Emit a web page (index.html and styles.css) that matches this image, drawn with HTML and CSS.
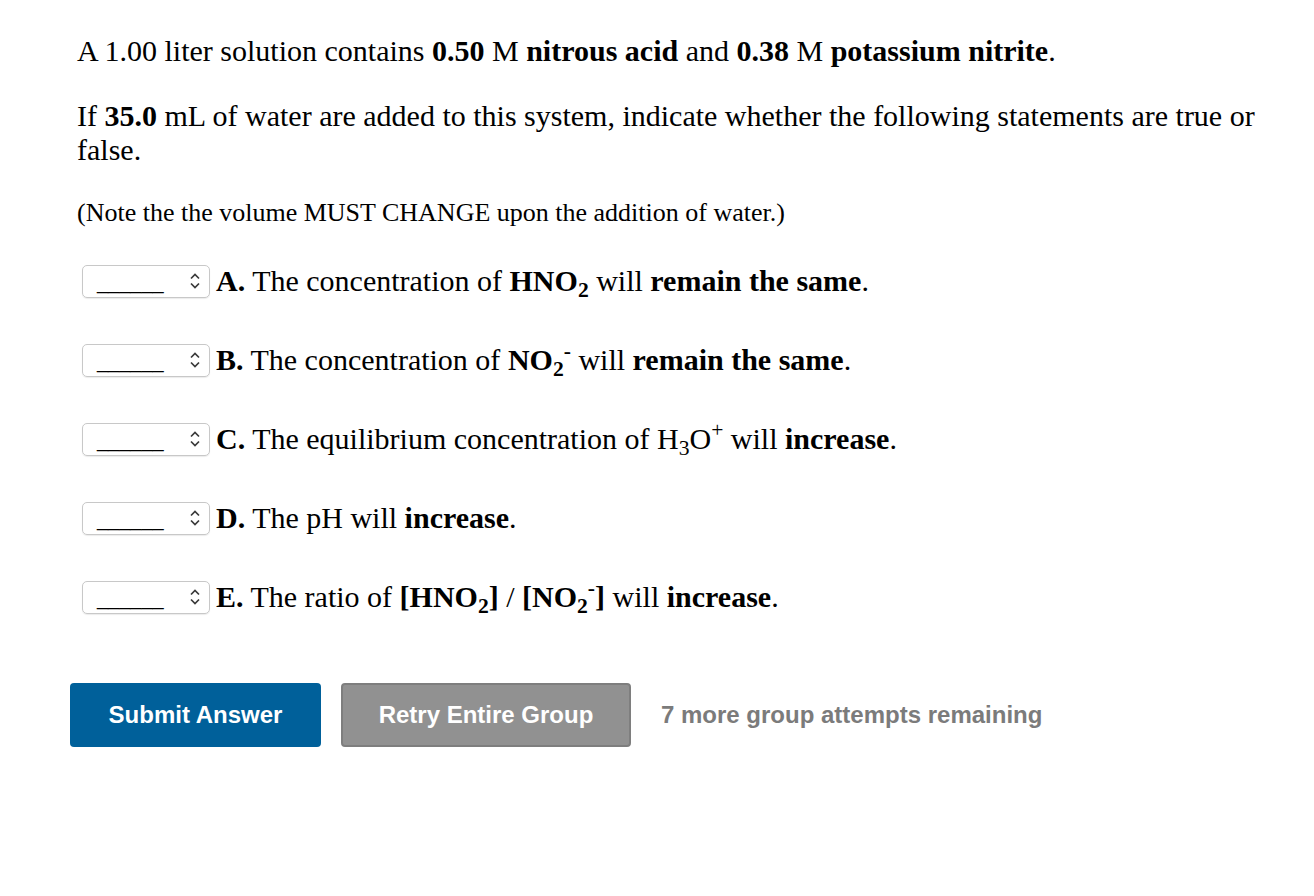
FILE: index.html
```html
<!DOCTYPE html>
<html lang="en">
<head>
    <meta charset="UTF-8">
    <title>Question</title>
    <link rel="stylesheet" href="styles.css">
</head>
<body>
    <div class="question">
        <p class="stem">A 1.00 liter solution contains <b>0.50</b> M <b>nitrous acid</b> and <b>0.38</b> M <b>potassium nitrite</b>.</p>

        <p class="stem">If <b>35.0</b> mL of water are added to this system, indicate whether the following statements are true or<br>false.</p>

        <p class="note">(Note the the volume MUST CHANGE upon the addition of water.)</p>

        <div class="statements">
            <div class="statement">
                <div class="pick"><span class="blank">______</span><svg class="chev" viewBox="0 0 12 20"><path d="M2 7.5 L6 3.5 L10 7.5 M2 12.5 L6 16.5 L10 12.5"/></svg></div>
                <span><b>A.</b> The concentration of <b>HNO<sub>2</sub></b> will <b>remain the same</b>.</span>
            </div>
            <div class="statement">
                <div class="pick"><span class="blank">______</span><svg class="chev" viewBox="0 0 12 20"><path d="M2 7.5 L6 3.5 L10 7.5 M2 12.5 L6 16.5 L10 12.5"/></svg></div>
                <span><b>B.</b> The concentration of <b>NO<sub>2</sub><sup>-</sup></b> will <b>remain the same</b>.</span>
            </div>
            <div class="statement">
                <div class="pick"><span class="blank">______</span><svg class="chev" viewBox="0 0 12 20"><path d="M2 7.5 L6 3.5 L10 7.5 M2 12.5 L6 16.5 L10 12.5"/></svg></div>
                <span><b>C.</b> The equilibrium concentration of H<sub>3</sub>O<sup>+</sup> will <b>increase</b>.</span>
            </div>
            <div class="statement">
                <div class="pick"><span class="blank">______</span><svg class="chev" viewBox="0 0 12 20"><path d="M2 7.5 L6 3.5 L10 7.5 M2 12.5 L6 16.5 L10 12.5"/></svg></div>
                <span><b>D.</b> The pH will <b>increase</b>.</span>
            </div>
            <div class="statement">
                <div class="pick"><span class="blank">______</span><svg class="chev" viewBox="0 0 12 20"><path d="M2 7.5 L6 3.5 L10 7.5 M2 12.5 L6 16.5 L10 12.5"/></svg></div>
                <span><b>E.</b> The ratio of <b>[HNO<sub>2</sub>]</b> / <b>[NO<sub>2</sub><sup>-</sup>]</b> will <b>increase</b>.</span>
            </div>
        </div>

        <div class="actions">
            <button class="btn submit">Submit Answer</button>
            <button class="btn retry">Retry Entire Group</button>
            <span class="remaining">7 more group attempts remaining</span>
        </div>
    </div>
</body>
</html>
```

FILE: styles.css
```css
body {
    margin: 0;
    background: #fff;
    font-family: "Liberation Serif", "Times New Roman", serif;
    color: #000;
}
.question {
    padding: 34px 40px 0 77px;
}
.stem {
    font-size: 30px;
    line-height: 34px;
    margin: 0 0 31px;
}
.note {
    font-size: 26px;
    line-height: 30px;
    margin: 0 0 37px;
}
sub, sup {
    font-size: 0.72em;
    line-height: 0;
    position: relative;
    vertical-align: baseline;
}
sub {
    top: 0.3em;
}
sup {
    top: -0.55em;
}
.statements {
    margin-left: 5px;
    display: flex;
    flex-direction: column;
    gap: 47px;
}
.statement {
    display: flex;
    align-items: center;
    gap: 6px;
    font-size: 30px;
    height: 32px;
}
.pick {
    flex: none;
    width: 128px;
    height: 33px;
    box-sizing: border-box;
    border: 1px solid #c8c8c8;
    border-radius: 5px;
    box-shadow: 0 1px 1px rgba(0,0,0,0.08);
    display: flex;
    align-items: center;
    justify-content: space-between;
    padding: 0 8px 0 14px;
    font-family: "Liberation Sans", Arial, sans-serif;
    font-size: 20px;
}
.blank {
    position: relative;
    top: 1px;
}
.chev {
    width: 12px;
    height: 20px;
    fill: none;
    stroke: #3a3a3a;
    stroke-width: 1.7;
}
.actions {
    display: flex;
    align-items: center;
    margin: 70px 0 0 -7px;
}
.btn {
    font-family: "Liberation Sans", Arial, sans-serif;
    font-weight: bold;
    font-size: 24px;
    color: #fff;
    height: 64px;
    border-radius: 4px;
    border: none;
    cursor: pointer;
}
.submit {
    width: 251px;
    background: #00609a;
    margin-right: 20px;
}
.retry {
    width: 290px;
    background: #919191;
    border: 2px solid #7e7e7e;
    margin-right: 30px;
}
.remaining {
    font-family: "Liberation Sans", Arial, sans-serif;
    font-weight: bold;
    font-size: 24px;
    color: #7b7b7b;
}
```
